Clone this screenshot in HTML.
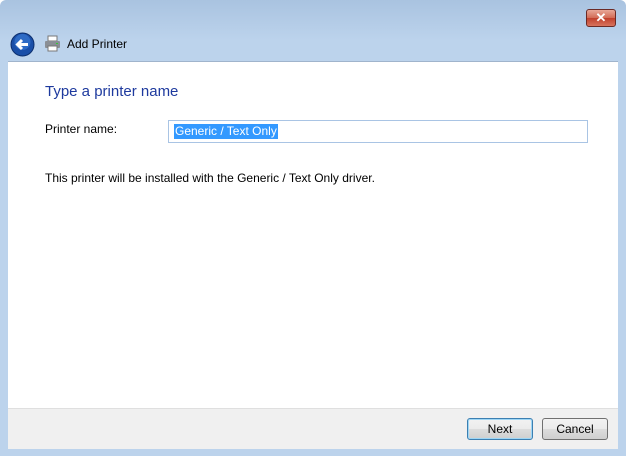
<!DOCTYPE html><html><head><style>
body{margin:0;width:626px;height:456px;overflow:hidden;font-family:"Liberation Sans",sans-serif;font-size:12px}
.frame{position:absolute;left:0;top:0;width:626px;height:456px;background:linear-gradient(#a9c3e0,#bcd3ec 40px,#bcd3ec);border-radius:6px 6px 0 0}
.content{position:absolute;left:8px;top:61px;width:610px;height:347px;background:#fff;border-top:1px solid #a0b4cc}
.footer{position:absolute;left:8px;top:408px;width:610px;height:40px;background:#f0f0f0;border-top:1px solid #dfdfdf}
.close{position:absolute;left:586px;top:9px;width:28px;height:16px;border:1px solid #6b2a25;border-radius:3px;background:linear-gradient(#e8a898,#d26a55 50%,#c0402c 51%,#d8735d);color:#fff;font-weight:bold;text-align:center;line-height:16px;font-size:13px}
.btn{position:absolute;top:418px;height:20px;border:1px solid #707070;border-radius:3px;background:linear-gradient(#f2f2f2,#ebebeb 50%,#dddddd 51%,#cfcfcf);text-align:center;line-height:20px;font-size:12px}
</style></head><body>
<div class="frame"></div>
<div class="close">✕</div>
<svg style="position:absolute;left:10px;top:32px" width="25" height="25"><circle cx="12.5" cy="12.5" r="11.5" fill="#1a4fa8" stroke="#0c2f6e"/><circle cx="12.5" cy="10" r="8" fill="#3c7fd8" opacity=".6"/><path d="M18 12.5H8M12 8l-4.5 4.5L12 17" stroke="#fff" stroke-width="3" fill="none"/></svg>
<svg style="position:absolute;left:44px;top:35px" width="17" height="17"><rect x="4" y="1" width="9" height="5" fill="#fff" stroke="#777"/><rect x="1" y="6" width="15" height="7" rx="1" fill="#8a8f96"/><rect x="4" y="11" width="9" height="5" fill="#fff" stroke="#777"/><rect x="12" y="8" width="2" height="1" fill="#3c3"/></svg>
<div style="position:absolute;left:67px;top:37px;font-size:12px;color:#000">Add Printer</div>
<div class="content"></div>
<div style="position:absolute;left:45px;top:83px;font-size:15px;color:#1e3a9e">Type a printer name</div>
<div style="position:absolute;left:45px;top:122px;color:#000">Printer name:</div>
<div style="position:absolute;left:168px;top:120px;width:418px;height:21px;border:1px solid #a9c4e4;background:#fff"><span style="position:absolute;left:5px;top:3px;background:#3399ff;color:#fff;padding:0 1px;line-height:15px">Generic / Text Only</span></div>
<div style="position:absolute;left:45px;top:171px;color:#000">This printer will be installed with the Generic / Text Only driver.</div>
<div class="footer"></div>
<div class="btn" style="left:467px;width:64px;border-color:#3c7fb1;box-shadow:inset 0 0 0 1px #9ed6f5">Next</div>
<div class="btn" style="left:542px;width:64px">Cancel</div>
</body></html>
